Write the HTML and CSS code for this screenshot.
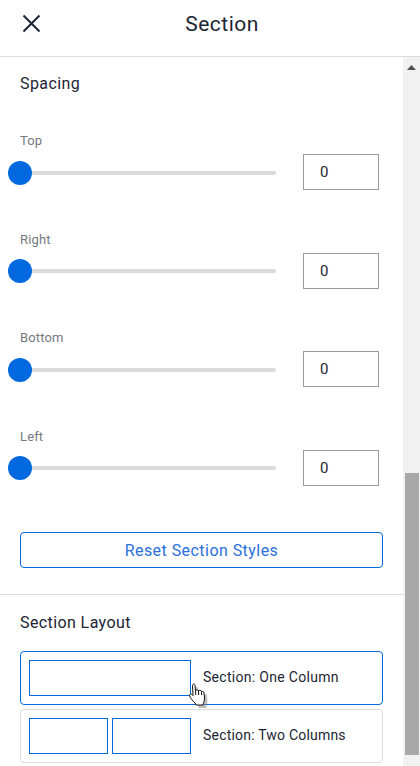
FILE: index.html
```html
<!DOCTYPE html>
<html lang="en">
<head>
<meta charset="utf-8">
<title>Section</title>
<link rel="stylesheet" href="styles.css">
</head>
<body>
<div class="panel">
  <header class="header">
    <svg class="close" width="20" height="20" viewBox="0 0 20 20"><path d="M2.500 1.500 L18.500 17.500 M18.500 1.500 L2.500 17.500" stroke="#1d2433" stroke-width="2" fill="none"/></svg>
    <h1 class="title">Section</h1>
  </header>
  <div class="body">
    <main class="content">
      <section class="spacing">
        <h2 class="heading">Spacing</h2>
        <div class="control"><label class="label">Top</label><div class="row"><div class="slider"><span class="thumb"></span></div><div class="input">0</div></div></div>
        <div class="control"><label class="label">Right</label><div class="row"><div class="slider"><span class="thumb"></span></div><div class="input">0</div></div></div>
        <div class="control"><label class="label">Bottom</label><div class="row"><div class="slider"><span class="thumb"></span></div><div class="input">0</div></div></div>
        <div class="control"><label class="label">Left</label><div class="row"><div class="slider"><span class="thumb"></span></div><div class="input">0</div></div></div>
        <button class="reset">Reset Section Styles</button>
      </section>
      <section class="layouts">
        <h2 class="heading">Section Layout</h2>
        <div class="card card-active">
          <div class="cols"><span class="col"></span></div>
          <span class="card-text">Section: One Column</span>
          <svg class="cursor" width="20" height="26" viewBox="0 0 20 26">
            <path d="M7 20 C5 18 2 15 1.500 12.500 C1.500 11 3 10.500 4.500 12 L5 12.500 L4.500 2.500 C4.500 0.500 7 0.500 7 2.500 L7.500 7.500 C8 6.500 10 6.500 10.500 8 C11 7 13 7 13.500 8.500 C14.500 8 16 8.500 16 10 L16.500 15 C16.500 18 15.500 20 15 22 L8 22 Z" fill="#8a8a8a" opacity="0.55" transform="translate(2 3)"/>
            <path d="M6 20 C4 18 1 15 .5 12.500 C.5 11 2 10.500 3.500 12 L4 12.500 L3.500 2.500 C3.500 .5 6 .5 6 2.500 L6.500 7.500 C7 6.500 9 6.500 9.500 8 C10 7 12 7 12.500 8.500 C13.500 8 15 8.500 15 10 L15.500 15 C15.500 18 14.500 20 14 22 L7 22 Z" fill="#fff" stroke="#111" stroke-width="1"/>
            <path d="M6.500 7.500 L6.800 12 M9.500 8 L9.700 12 M12.500 8.500 L12.600 12" stroke="#111" stroke-width="1" fill="none"/>
          </svg>
        </div>
        <div class="card">
          <div class="cols"><span class="col"></span><span class="col"></span></div>
          <span class="card-text card-text-tight">Section: Two Columns</span>
        </div>
      </section>
    </main>
    <div class="scrollbar">
      <svg class="arrow" width="9" height="5" viewBox="0 0 9 5"><path d="M4.500 0 L9 5 L0 5 Z" fill="#505050"/></svg>
      <div class="scroll-thumb"></div>
    </div>
  </div>
</div>
</body>
</html>
```
FILE: styles.css
```css
* { box-sizing: border-box; }
html, body { margin: 0; height: 100%; }
body {
  font-family: Roboto, "Liberation Sans", sans-serif;
  color: #1d2433;
  background: #fff;
  overflow: hidden;
}
.panel { width: 420px; height: 766px; display: flex; flex-direction: column; }
.header {
  height: 57px;
  flex: none;
  border-bottom: 1px solid #dcdcde;
  position: relative;
  display: flex;
  align-items: center;
  justify-content: center;
}
.close { position: absolute; left: 21px; top: 14px; }
.title { margin: 0 0 8px 24px; font-size: 21px; font-weight: 400; letter-spacing: .5px; line-height: 24px; }
.body { flex: 1; display: flex; min-height: 0; }
.content { width: 403px; flex: none; }
.spacing { padding: 17px 20px 26px; border-bottom: 1px solid #dcdcde; }
.heading { margin: 0; font-size: 16px; font-weight: 400; line-height: 20px; letter-spacing: .4px; }
.control { height: 98.5px; }
.spacing .heading { margin-bottom: 38px; }
.label { display: block; font-size: 13px; line-height: 18px; color: #75797f; letter-spacing: .15px; }
.row { display: flex; align-items: center; justify-content: space-between; width: 359px; margin-top: 4px; }
.slider { position: relative; width: 256px; height: 4px; margin-top: 1.5px; background: #d9dadd; border-radius: 2px; }
.thumb { position: absolute; left: -12px; top: -10px; width: 24px; height: 24px; border-radius: 50%; background: #0069e0; }
.input {
  width: 76px; height: 36px;
  border: 1px solid #9a9b9f;
  padding-left: 16px;
  font-size: 15px;
  line-height: 34px;
  color: #1d2433;
}
.reset {
  display: block;
  width: 363px; height: 36px;
  margin-top: 6px;
  background: #fff;
  border: 1px solid #0069e0;
  border-radius: 4px;
  color: #2a6fdc;
  font: 400 16px Roboto, "Liberation Sans", sans-serif;
  letter-spacing: .45px;
}
.layouts { padding: 18px 20px 0; }
.layouts .heading { margin-bottom: 18px; }
.card {
  position: relative;
  width: 363px; height: 54px;
  border: 1px solid #dcdcde;
  border-radius: 4px;
  display: flex;
  align-items: center;
  padding-left: 8px;
  gap: 12px;
  margin-bottom: 4px;
}
.card-active { border-color: #0069e0; }
.cols { width: 162px; height: 36px; display: flex; gap: 4px; flex: none; }
.col { flex: 1; border: 1px solid #0069e0; }
.card-text { font-size: 14px; letter-spacing: .3px; line-height: 18px; margin-bottom: 2px; }
.card-text-tight { letter-spacing: .2px; }
.cursor { position: absolute; left: 168px; top: 31px; }
.scrollbar { width: 17px; flex: none; background: #f1f1f1; padding: 8px 1px 0 2px; }
.arrow { display: block; margin-left: 2px; }
.scroll-thumb { width: 14px; height: 282px; background: #a8a8a8; margin-top: 403px; }
```
